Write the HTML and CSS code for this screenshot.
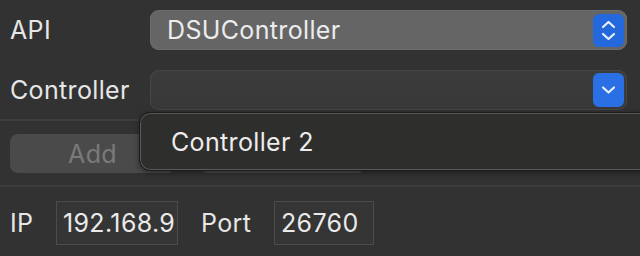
FILE: index.html
```html
<!DOCTYPE html>
<html lang="en">
<head>
    <meta charset="UTF-8">
    <title>DSU Settings</title>
    <link rel="stylesheet" href="styles.css">
</head>
<body>
    <div class="panel">
        <div class="row">
            <span class="label">API</span>
            <div class="popup popup-filled">
                <span class="popup-text">DSUController</span>
                <span class="arrow-box">
                    <svg width="31" height="33" viewBox="0 0 31 33">
                        <path d="M10 13 L15.5 8 L21 13" fill="none" stroke="#e8efff" stroke-width="2.2" stroke-linecap="round" stroke-linejoin="round"/>
                        <path d="M10 20 L15.5 25 L21 20" fill="none" stroke="#e8efff" stroke-width="2.2" stroke-linecap="round" stroke-linejoin="round"/>
                    </svg>
                </span>
            </div>
        </div>
        <div class="row row-gap">
            <span class="label">Controller</span>
            <div class="popup popup-empty">
                <span class="popup-text"></span>
                <span class="arrow-box">
                    <svg width="31" height="34" viewBox="0 0 31 34">
                        <path d="M10 14.5 L15.5 19.5 L21 14.5" fill="none" stroke="#e8efff" stroke-width="2.2" stroke-linecap="round" stroke-linejoin="round"/>
                    </svg>
                </span>
            </div>
        </div>

        <div class="sep sep-top"></div>

        <div class="buttons">
            <div class="btn btn-disabled">Add</div>
            <div class="btn"></div>
        </div>

        <div class="sep"></div>

        <div class="row fields">
            <span class="field-label ip-label">IP</span>
            <div class="field field-ip">192.168.9</div>
            <span class="field-label port-label">Port</span>
            <div class="field field-port">26760</div>
        </div>
    </div>

    <!-- open popup menu -->
    <div class="menu">
        <div class="menu-item">Controller 2</div>
    </div>
</body>
</html>
```

FILE: styles.css
```css
* {
    margin: 0;
    padding: 0;
    box-sizing: border-box;
}

body {
    width: 640px;
    height: 256px;
    overflow: hidden;
    background: #323232;
    font-family: Inter, 'Noto Sans', sans-serif;
    font-size: 25px;
    letter-spacing: 0.35px;
    color: #e6e6e6;
    position: relative;
}

.panel {
    padding-top: 10px;
}

.row {
    display: flex;
    align-items: center;
    height: 40px;
    padding-left: 10px;
}

.row-gap {
    margin-top: 20px;
}

.label {
    width: 140px;
}

.popup {
    width: 477px;
    height: 40px;
    border-radius: 9px;
    display: flex;
    align-items: center;
    justify-content: space-between;
    padding: 0 3px 0 17px;
}

.popup-filled {
    background: #656565;
    box-shadow: inset 0 0 0 1px #6c6c6c;
}

.popup-empty {
    background: linear-gradient(#3c3c3c, #383838);
    box-shadow: inset 0 0 0 1px #464646;
}

.popup-text {
    color: #ececec;
}

.arrow-box {
    width: 31px;
    height: 33px;
    border-radius: 6px;
    background: #2468dd;
    display: flex;
}

.popup-empty .arrow-box {
    height: 34px;
    background: #2a70e4;
}

.sep {
    height: 2px;
    background: #3d3d3d;
}

.sep-top {
    margin-top: 9px;
}

.buttons {
    display: flex;
    gap: 25px;
    padding: 13px 10px 12px;
}

.btn {
    width: 165px;
    height: 39px;
    border-radius: 8px;
    background: #4a4a4a;
    display: flex;
    align-items: center;
    justify-content: center;
}

.btn-disabled {
    color: #7a7a7a;
}

.fields {
    margin-top: 14px;
    height: 44px;
}

.field-label {
    color: #e6e6e6;
}

.ip-label {
    width: 46px;
}

.port-label {
    margin-left: 23px;
    width: 73px;
}

.field {
    height: 44px;
    border: 1px solid #4c4c4c;
    background: #353535;
    padding-left: 6px;
    display: flex;
    align-items: center;
    overflow: hidden;
    white-space: nowrap;
    color: #eaeaea;
}

.field-ip {
    width: 122px;
}

.field-port {
    width: 100px;
}

.menu {
    position: absolute;
    left: 139px;
    top: 112px;
    width: 530px;
    height: 59px;
    border-radius: 11px;
    background: #2e2e2c;
    border: 1px solid #1a1a1a;
    box-shadow: inset 0 0 0 1px #5a5a58, 0 2px 6px rgba(0, 0, 0, 0.4);
    display: flex;
    align-items: center;
    padding-left: 31px;
}

.menu-item {
    color: #ececec;
}
```
